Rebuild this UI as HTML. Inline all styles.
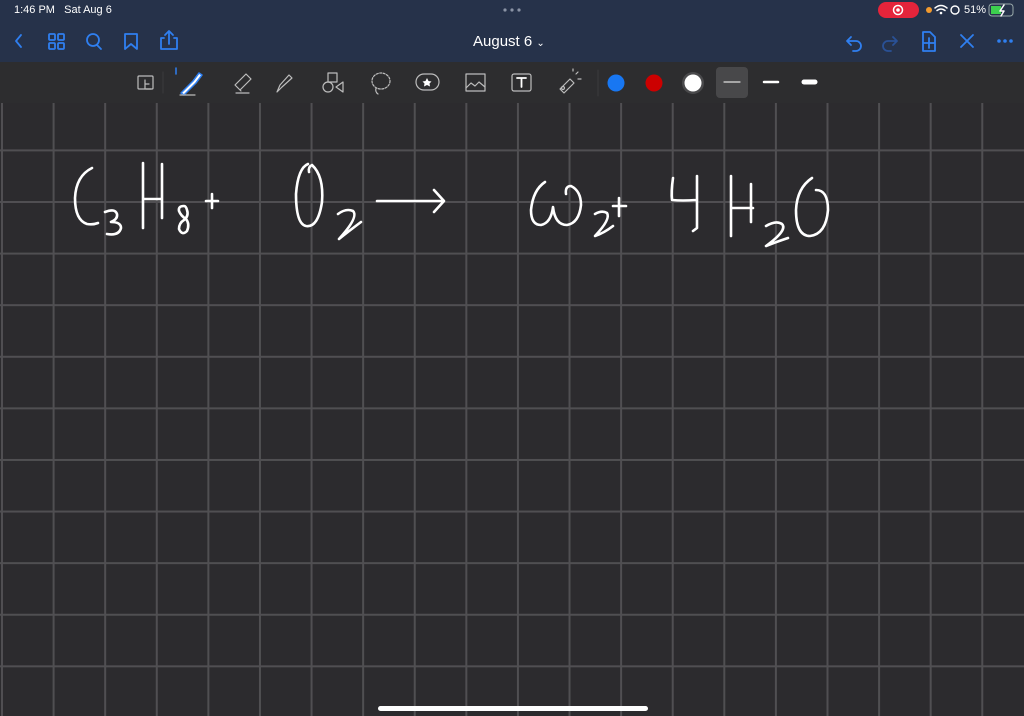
<!DOCTYPE html>
<html><head><meta charset="utf-8"><style>
*{margin:0;padding:0;box-sizing:border-box}
body{width:1024px;height:716px;overflow:hidden;background:#2c2b2e;font-family:"Liberation Sans",sans-serif;position:relative}
#hdr{position:absolute;left:0;top:0;width:1024px;height:62px;background:#26324a}
#tb{position:absolute;left:0;top:62px;width:1024px;height:41px;background:#2d2d2f}
#cv{position:absolute;left:0;top:103px;width:1024px;height:613px;
background-color:#2c2b2e;
background-image:linear-gradient(to right,#504f52 0,#504f52 2px,transparent 2px),linear-gradient(to bottom,#504f52 0,#504f52 2px,transparent 2px);
background-size:51.6px 51.6px;background-position:1px -5.2px}
.t{position:absolute;color:#fff;font-size:11px}
svg{position:absolute;left:0;top:0}
</style></head><body>
<div id="hdr"></div>
<div id="tb"></div>
<div id="cv"></div>
<div class="t" style="left:14px;top:4px">1:46 PM&nbsp;&nbsp;&nbsp;Sat Aug 6</div>
<div class="t" style="left:473px;top:33px;font-size:15px">August 6 <span style="font-size:10px">⌄</span></div>
<div class="t" style="left:964px;top:4px">51%</div>
<svg width="1024" height="716" fill="none" stroke-linecap="round" stroke-linejoin="round">
<!-- status -->
<circle cx="505" cy="10" r="1.6" fill="#8a93a5" stroke="none"/><circle cx="512" cy="10" r="1.6" fill="#8a93a5" stroke="none"/><circle cx="519" cy="10" r="1.6" fill="#8a93a5" stroke="none"/>
<rect x="878" y="2" width="41" height="16" rx="8" fill="#e5243b" stroke="none"/>
<circle cx="898" cy="10" r="4.5" stroke="#fff" stroke-width="1.5"/><circle cx="898" cy="10" r="1.8" fill="#fff" stroke="none"/>
<circle cx="929" cy="10" r="3" fill="#f29a2e" stroke="none"/>
<path d="M935 8q6-5 12 0M937 10.5q4-3 8 0" stroke="#fff" stroke-width="1.5"/><circle cx="941" cy="13" r="1.3" fill="#fff" stroke="none"/>
<circle cx="955" cy="10" r="4" stroke="#fff" stroke-width="1.4"/>
<rect x="989" y="4" width="24" height="12" rx="3" stroke="#9aa" stroke-width="1"/><rect x="991" y="6" width="10" height="8" fill="#3ccf4e" stroke="none"/><path d="M1004 5l-4 6h4l-3 5" stroke="#fff" stroke-width="1.5"/>
<!-- nav icons -->
<g stroke="#2f7ff0" stroke-width="1.8">
<path d="M21 35l-5 6 5 6"/>
<rect x="49" y="34" width="6" height="6" rx="1"/><rect x="58" y="34" width="6" height="6" rx="1"/><rect x="49" y="43" width="6" height="6" rx="1"/><rect x="58" y="43" width="6" height="6" rx="1"/>
<circle cx="93" cy="40" r="6"/><path d="M97 45l4 4"/>
<path d="M125 34h12v15l-6-5-6 5z"/>
<path d="M164 38h-3v11h16v-11h-3M169 44v-13M165 35l4-4 4 4"/>
<path d="M851 37l-4 4 4 4M847 41h9a5 5 0 010 10h-3"/>
<path d="M893 37l4 4-4 4M897 41h-9a5 5 0 000 10h3" stroke="#2a5196"/>
<path d="M923 32h7l5 5v14h-12zM929 38v10M924 43h10"/>
<path d="M961 35l12 12M973 35l-12 12"/>
</g>
<circle cx="999" cy="41" r="1.8" fill="#2f7ff0"/><circle cx="1005" cy="41" r="1.8" fill="#2f7ff0"/><circle cx="1011" cy="41" r="1.8" fill="#2f7ff0"/>
<!-- toolbar icons -->
<g stroke="#bdbdbd" stroke-width="1.2">
<rect x="138" y="76" width="15" height="13" rx="1"/><path d="M145 80v9M145 84h4M151 89l-5 0"/>
<line x1="163" y1="72" x2="163" y2="93" stroke="#3a3a3c"/>
<path d="M240 90l-5-5 11-11 5 5z M237 87l4 4M236 93h13"/>
<path d="M277 92l3-7 9-10 3 3-10 9z"/>
<rect x="328" y="73" width="9" height="9"/><circle cx="328" cy="87" r="5"/><path d="M343 82v10l-7-5z"/>
<ellipse cx="381" cy="81" rx="9" ry="8" stroke-dasharray="2 1.5"/><path d="M376 88q-1 4 2 6"/>
<rect x="416" y="74" width="23" height="16" rx="8"/><path d="M427 78l1.5 3 3 .5-2 2 .5 3-3-1.5-3 1.5.5-3-2-2 3-.5z" fill="#fff" stroke="none"/>
<rect x="466" y="74" width="19" height="17"/><path d="M466 88l5-5 4 3 4-4 6 5"/>
<rect x="512" y="74" width="19" height="17" rx="2"/><path d="M517 78h9M521.5 78v9" stroke="#fff" stroke-width="1.8"/>
<path d="M560 89l10-10 4 4-10 10z M576 74l2-2M578 79l3 0M573 71v-2"/><circle cx="563" cy="88" r="1.5"/>
</g>
<path d="M181 93l12-12 6-8 3 2-6 8-12 12z" fill="#fff" stroke="#2f7ff0" stroke-width="1.5"/><path d="M180 95h15" stroke="#bbb" stroke-width="1.2"/>
<path d="M176 68v6" stroke="#2f7ff0" stroke-width="1.5"/>
<line x1="598" y1="70" x2="598" y2="96" stroke="#3a3a3c"/>
<circle cx="616" cy="83" r="8.5" fill="#1877f2" stroke="none"/>
<circle cx="654" cy="83" r="8.5" fill="#cc0000" stroke="none"/>
<circle cx="693" cy="83" r="11" fill="#4a4a4c" stroke="none"/><circle cx="693" cy="83" r="8.5" fill="#fff" stroke="none"/>
<rect x="716" y="67" width="32" height="31" rx="4" fill="#48484a" stroke="none"/>
<path d="M724 82h16" stroke="#ddd" stroke-width="1.2"/>
<path d="M764 82h14" stroke="#fff" stroke-width="2.5"/>
<path d="M804 82h11" stroke="#fff" stroke-width="5"/>
<!-- handwriting -->
<g stroke="#fff" stroke-width="2.6">
<path d="M92 168q-16 8-17 30q0 22 12 26q6 1 11 -1"/>
<path d="M105 212q10-4 12 2q1 5-6 8q10 0 10 6q-2 8-14 6"/>
<path d="M143 163v65M162 164v54M144 199h18"/>
<path d="M184 206q-6 0-5 5q2 5 7 8q4 5 1 12q-5 5-8-2q0-6 5-9q5-4 3-10q-1-4-3-4z"/>
<path d="M212 194v14M206 201h12"/>
<path d="M308 164q-10 4-12 30q0 30 10 32q12 2 16-24q2-26-10-37q-4 2-3 7"/>
<path d="M338 214q8-6 15-3q6 6-14 28q10-8 22-17"/>
<path d="M377 201h66M434 190l10 11-10 11"/>
<path d="M545 182q-12 8-14 28q0 15 10 15q10-2 12-18q2 18 14 18q12-2 14-20q0-14-10-19q-6 0-5 8"/>
<path d="M595 214q7-4 12-1q4 6-12 23q9-3 18-10"/>
<path d="M619 198v18M613 206h13"/>
<path d="M673 178q-2 14-1 22q10 1 24 0M697 176v52l-4 3"/>
<path d="M731 176v60M751 184v38M731 208h22"/>
<path d="M766 226q10-6 16-2q6 6-16 22q10-4 22-8"/>
<path d="M812 178q-15 10-16 32q0 26 14 26q16-2 18-26q0-20-12-20"/>
</g>
<rect x="378" y="706" width="270" height="5" rx="2.5" fill="#fff" stroke="none"/>
</svg>
</body></html>
